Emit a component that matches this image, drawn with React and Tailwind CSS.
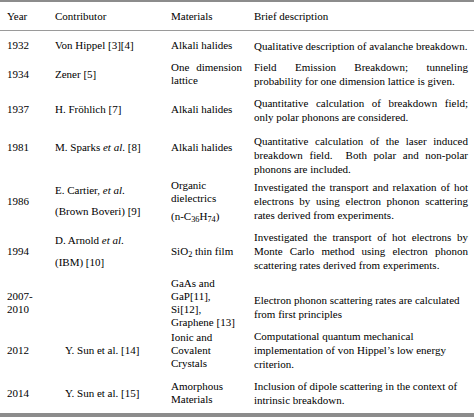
const rows = [
  {
    year: "1932",
    who: "Von Hippel [3][4]",
    mat: "Alkali halides",
    desc: "Qualitative description of avalanche breakdown.",
    h: "h-[29px]",
  },
];

function Row({ h, year, who, mat, desc, justify = true, className = "" }) {
  return (
    <div className={`grid grid-cols-[55px_116px_83px_1fr] ${h} ${className}`}>
      <div className="flex flex-col justify-center pl-[7px]">{year}</div>
      <div className="flex flex-col justify-center">{who}</div>
      <div className="flex flex-col justify-center pr-[12px] text-justify">{mat}</div>
      <div
        className={`flex flex-col justify-center w-[214px] leading-[14px] ${
          justify ? "text-justify" : "text-left"
        }`}
      >
        {desc}
      </div>
    </div>
  );
}

export default function App() {
  return (
    <div
      className="w-[474px] h-[418px] bg-white text-[11px] leading-[13px] text-black overflow-hidden"
      style={{ fontFamily: '"Liberation Serif", "Times New Roman", serif' }}
    >
      <div className="h-[2px] bg-[#8c8c8c]" />
      <Row
        h="h-[28px]"
        year="Year"
        who="Contributor"
        mat="Materials"
        desc="Brief description"
      />
      <div className="h-px bg-[#9a9a9a]" />
      {rows.map((r) => (
        <Row key={r.year} {...r} />
      ))}
      <Row
        h="h-[27px]"
        year="1934"
        who="Zener [5]"
        mat="One dimension lattice"
        desc="Field Emission Breakdown; tunneling probability for one dimension lattice is given."
      />
      <Row
        h="h-[45px]"
        year="1937"
        who="H. Fröhlich [7]"
        mat="Alkali halides"
        desc="Quantitative calculation of breakdown field; only polar phonons are considered."
      />
      <div className="grid grid-cols-[55px_116px_83px_1fr] h-[45px]">
        <div className="flex flex-col justify-center pl-[7px] pb-[14px]">1981</div>
        <div className="flex flex-col justify-center pb-[14px]">
          <span>
            M. Sparks <i>et al</i>. [8]
          </span>
        </div>
        <div className="flex flex-col justify-center pb-[14px]">Alkali halides</div>
        <div className="flex flex-col justify-center w-[214px] leading-[14px] text-justify">
          Quantitative calculation of the laser induced breakdown field.&nbsp; Both polar and
          non-polar phonons are included.
        </div>
      </div>
      <div className="grid grid-cols-[55px_116px_83px_1fr] h-[48px]">
        <div className="flex flex-col justify-center pl-[7px]">1986</div>
        <div className="flex flex-col justify-center gap-[8px]">
          <span>
            E. Cartier, <i>et al</i>.
          </span>
          <span>(Brown Boveri) [9]</span>
        </div>
        <div className="flex flex-col justify-center">
          <span>Organic</span>
          <span>dielectrics</span>
          <span className="mt-[5px]">
            (n-C<sub>36</sub>H<sub>74</sub>)
          </span>
        </div>
        <div className="flex flex-col justify-center w-[214px] leading-[14px] text-justify">
          Investigated the transport and relaxation of hot electrons by using electron phonon
          scattering rates derived from experiments.
        </div>
      </div>
      <div className="grid grid-cols-[55px_116px_83px_1fr] h-[52px]">
        <div className="flex flex-col justify-center pl-[7px]">1994</div>
        <div className="flex flex-col justify-center gap-[9px]">
          <span>
            D. Arnold <i>et al</i>.
          </span>
          <span>(IBM) [10]</span>
        </div>
        <div className="flex flex-col justify-center">
          <span>
            SiO<sub>2</sub> thin film
          </span>
        </div>
        <div className="flex flex-col justify-center w-[214px] leading-[14px] text-justify">
          Investigated the transport of hot electrons by Monte Carlo method using electron
          phonon scattering rates derived from experiments.
        </div>
      </div>
      <div className="grid grid-cols-[55px_116px_83px_1fr] h-[50px]">
        <div className="flex flex-col justify-center pl-[7px]">
          <span>2007-</span>
          <span>2010</span>
        </div>
        <div />
        <div className="flex flex-col justify-center">
          <span>GaAs and</span>
          <span>GaP[11],</span>
          <span>Si[12],</span>
          <span>Graphene [13]</span>
        </div>
        <div className="flex flex-col justify-center w-[214px] leading-[14px] pt-[8px]">
          Electron phonon scattering rates are calculated from first principles
        </div>
      </div>
      <div className="grid grid-cols-[55px_116px_83px_1fr] h-[46px]">
        <div className="flex flex-col justify-center pl-[7px]">2012</div>
        <div className="flex flex-col justify-center pl-[10px]">Y. Sun et al. [14]</div>
        <div className="flex flex-col justify-center">
          <span>Ionic and</span>
          <span>Covalent</span>
          <span>Crystals</span>
        </div>
        <div className="flex flex-col justify-center w-[214px] leading-[14px]">
          Computational quantum mechanical implementation of von Hippel’s low energy
          criterion.
        </div>
      </div>
      <div className="grid grid-cols-[55px_116px_83px_1fr] h-[40px]">
        <div className="flex flex-col justify-center pl-[7px]">2014</div>
        <div className="flex flex-col justify-center pl-[10px]">Y. Sun et al. [15]</div>
        <div className="flex flex-col justify-center">
          <span>Amorphous</span>
          <span>Materials</span>
        </div>
        <div className="flex flex-col justify-center w-[214px] leading-[14px]">
          Inclusion of dipole scattering in the context of intrinsic breakdown.
        </div>
      </div>
      <div className="h-[4px] bg-[#8c8c8c]" />
    </div>
  );
}
